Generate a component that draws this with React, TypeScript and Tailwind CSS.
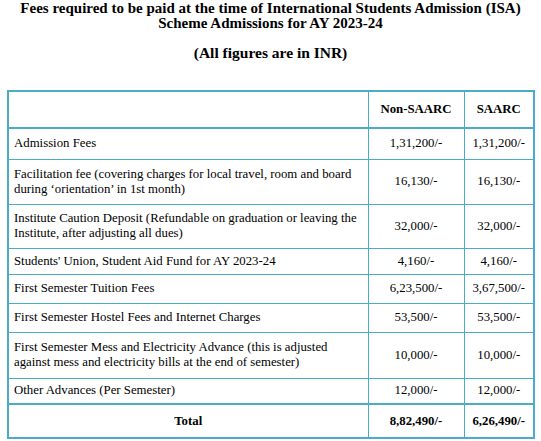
const rows = [
  { label: "Admission Fees", a: "1,31,200/-", b: "1,31,200/-", h: "h-[31px]" },
  {
    label: "Facilitation fee (covering charges for local travel, room and board during \u2018orientation\u2019 in 1st month)",
    a: "16,130/-",
    b: "16,130/-",
    h: "h-[45px]",
  },
  {
    label: "Institute Caution Deposit (Refundable on graduation or leaving the Institute, after adjusting all dues)",
    a: "32,000/-",
    b: "32,000/-",
    h: "h-[44px]",
  },
  { label: "Students' Union, Student Aid Fund for AY 2023-24", a: "4,160/-", b: "4,160/-", h: "h-[26px]" },
  { label: "First Semester Tuition Fees", a: "6,23,500/-", b: "3,67,500/-", h: "h-[29px]" },
  { label: "First Semester Hostel Fees and Internet Charges", a: "53,500/-", b: "53,500/-", h: "h-[29px]" },
  {
    label: "First Semester Mess and Electricity Advance (this is adjusted against mess and electricity bills at the end of semester)",
    a: "10,000/-",
    b: "10,000/-",
    h: "h-[46px]",
  },
  { label: "Other Advances (Per Semester)", a: "12,000/-", b: "12,000/-", h: "h-[26px]" },
];

export default function App() {
  return (
    <div className="w-[541px] h-[441px] bg-white text-black font-['Liberation_Serif',serif] overflow-hidden">
      {/* Heading */}
      <div className="pt-[1px] text-center font-bold text-[15px] leading-[14.5px]">
        <p>Fees required to be paid at the time of International Students Admission (ISA)</p>
        <p>Scheme Admissions for AY 2023-24</p>
      </div>
      <p className="mt-[15px] text-center font-bold text-[15.5px] leading-[16px]">(All figures are in INR)</p>

      {/* Fee table */}
      <table className="mt-[29px] ml-[7px] w-[528px] table-fixed border-collapse border-2 border-[#4bacc6] text-[12.8px] leading-[15px]">
        <colgroup>
          <col className="w-[360px]" />
          <col className="w-[96px]" />
          <col />
        </colgroup>
        <thead>
          <tr className="h-[37px] border-b-2 border-[#4bacc6] font-bold">
            <th className="border border-[#4bacc6]"></th>
            <th className="border border-[#4bacc6] text-center">Non-SAARC</th>
            <th className="border border-[#4bacc6] text-center">SAARC</th>
          </tr>
        </thead>
        <tbody>
          {rows.map((r) => (
            <tr key={r.label} className={r.h}>
              <td className="border border-[#4bacc6] pl-[5px] pr-[6px] align-middle">{r.label}</td>
              <td className="border border-[#4bacc6] text-center">{r.a}</td>
              <td className="border border-[#4bacc6] text-center">{r.b}</td>
            </tr>
          ))}
          <tr className="h-[34px] border-t-2 border-[#4bacc6] font-bold">
            <td className="border border-[#4bacc6] border-t-2 text-center">Total</td>
            <td className="border border-[#4bacc6] border-t-2 text-center">8,82,490/-</td>
            <td className="border border-[#4bacc6] border-t-2 text-center">6,26,490/-</td>
          </tr>
        </tbody>
      </table>
    </div>
  );
}
